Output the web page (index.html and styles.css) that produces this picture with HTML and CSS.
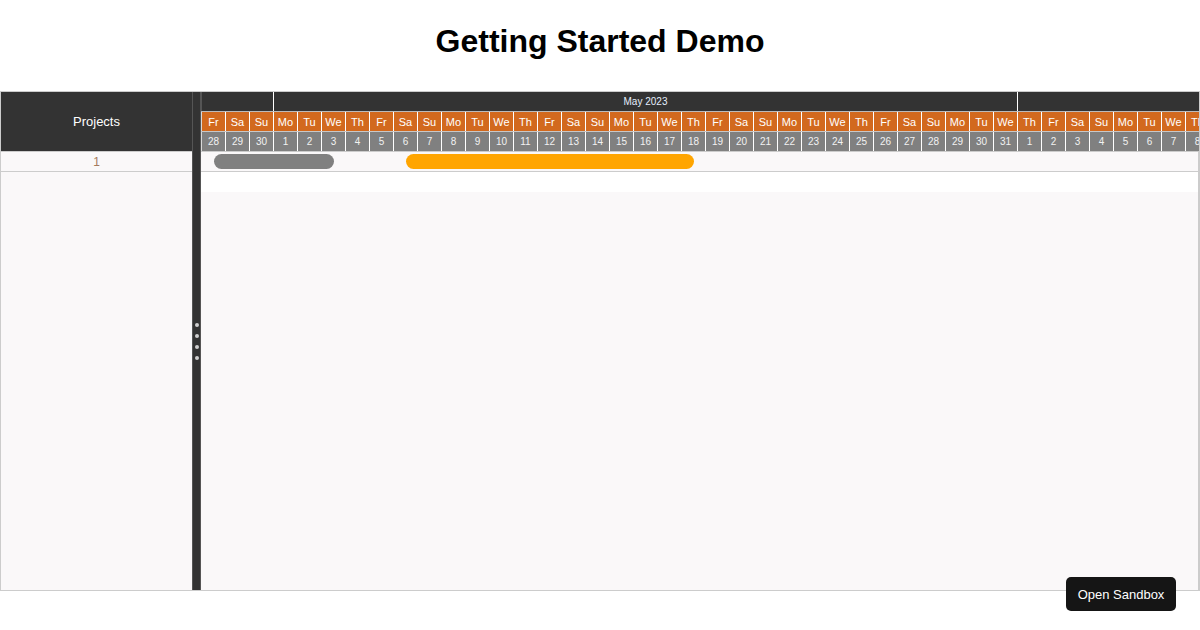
FILE: index.html
```html
<!DOCTYPE html>
<html>
<head>
<meta charset="utf-8">
<title>Getting Started Demo</title>
<link rel="stylesheet" href="styles.css">
</head>
<body>
<h1 class="title">Getting Started Demo</h1>
<div class="gantt">
  <div class="grid">
    <div class="grid-head">Projects</div>
    <div class="grid-row">1</div>
    <div class="grid-rest"></div>
  </div>
  <div class="splitter">
    <span class="dot"></span><span class="dot"></span><span class="dot"></span><span class="dot"></span>
  </div>
  <div class="timeline">
    <div class="tl-row months">
      <div class="month" style="width:72px"></div>
      <div class="month" style="width:744px">May 2023</div>
      <div class="month" style="width:240px"></div>
    </div>
    <div class="tl-row daynames">
      <div class="cell">Fr</div><div class="cell">Sa</div><div class="cell">Su</div>
      <div class="cell">Mo</div><div class="cell">Tu</div><div class="cell">We</div><div class="cell">Th</div><div class="cell">Fr</div><div class="cell">Sa</div><div class="cell">Su</div>
      <div class="cell">Mo</div><div class="cell">Tu</div><div class="cell">We</div><div class="cell">Th</div><div class="cell">Fr</div><div class="cell">Sa</div><div class="cell">Su</div>
      <div class="cell">Mo</div><div class="cell">Tu</div><div class="cell">We</div><div class="cell">Th</div><div class="cell">Fr</div><div class="cell">Sa</div><div class="cell">Su</div>
      <div class="cell">Mo</div><div class="cell">Tu</div><div class="cell">We</div><div class="cell">Th</div><div class="cell">Fr</div><div class="cell">Sa</div><div class="cell">Su</div>
      <div class="cell">Mo</div><div class="cell">Tu</div><div class="cell">We</div>
      <div class="cell">Th</div><div class="cell">Fr</div><div class="cell">Sa</div><div class="cell">Su</div>
      <div class="cell">Mo</div><div class="cell">Tu</div><div class="cell">We</div><div class="cell">Th</div><div class="cell">Fr</div><div class="cell">Sa</div>
    </div>
    <div class="tl-row daynums">
      <div class="cell">28</div><div class="cell">29</div><div class="cell">30</div>
      <div class="cell">1</div><div class="cell">2</div><div class="cell">3</div><div class="cell">4</div><div class="cell">5</div><div class="cell">6</div><div class="cell">7</div>
      <div class="cell">8</div><div class="cell">9</div><div class="cell">10</div><div class="cell">11</div><div class="cell">12</div><div class="cell">13</div><div class="cell">14</div>
      <div class="cell">15</div><div class="cell">16</div><div class="cell">17</div><div class="cell">18</div><div class="cell">19</div><div class="cell">20</div><div class="cell">21</div>
      <div class="cell">22</div><div class="cell">23</div><div class="cell">24</div><div class="cell">25</div><div class="cell">26</div><div class="cell">27</div><div class="cell">28</div>
      <div class="cell">29</div><div class="cell">30</div><div class="cell">31</div>
      <div class="cell">1</div><div class="cell">2</div><div class="cell">3</div><div class="cell">4</div>
      <div class="cell">5</div><div class="cell">6</div><div class="cell">7</div><div class="cell">8</div><div class="cell">9</div><div class="cell">10</div>
    </div>
    <div class="tl-body">
      <div class="task-row">
        <div class="bar bar-gray" style="left:13px;width:120px"></div>
        <div class="bar bar-orange" style="left:205px;width:288px"></div>
      </div>
      <div class="empty-row"></div>
      <div class="tl-rest"></div>
    </div>
  </div>
</div>
<a class="sandbox-btn" href="#">Open Sandbox</a>
</body>
</html>
```
FILE: styles.css
```css
html, body {
  margin: 0;
  padding: 0;
  background: #fff;
  font-family: "Liberation Sans", Arial, sans-serif;
}
.title {
  margin: 0 0 32px 0;
  padding-top: 23px;
  font-size: 32px;
  line-height: 36px;
  font-weight: bold;
  text-align: center;
  color: #000;
}
.gantt {
  box-sizing: border-box;
  width: 1200px;
  height: 500px;
  border: 1px solid #ccc;
  display: flex;
  overflow: hidden;
}
.grid {
  width: 191px;
  flex: none;
  display: flex;
  flex-direction: column;
  background: #faf8f9;
}
.grid-head {
  box-sizing: border-box;
  height: 60px;
  background: #333;
  border-bottom: 1px solid #ccc;
  color: #fff;
  font-size: 13px;
  display: flex;
  align-items: center;
  justify-content: center;
}
.grid-row {
  box-sizing: border-box;
  height: 20px;
  border-bottom: 1px solid #ccc;
  font-size: 12px;
  color: #a47a5c;
  display: flex;
  align-items: center;
  justify-content: center;
}
.grid-rest {
  flex: 1;
}
.splitter {
  box-sizing: border-box;
  width: 9px;
  flex: none;
  background: #333;
  border-left: 1px solid #555;
  border-right: 1px solid #555;
  display: flex;
  flex-direction: column;
  align-items: center;
  justify-content: center;
  gap: 7px;
}
.dot {
  width: 4px;
  height: 4px;
  border-radius: 50%;
  background: #d0d0d0;
}
.timeline {
  flex: 1;
  min-width: 0;
  overflow: hidden;
  display: flex;
  flex-direction: column;
}
.tl-row {
  display: flex;
  flex: none;
  height: 20px;
  box-sizing: border-box;
  white-space: nowrap;
}
.months {
  background: #333;
  border-bottom: 1px solid #bbb;
}
.month {
  flex: none;
  box-sizing: border-box;
  border-left: 1px solid #fff;
  color: #e4eefc;
  font-size: 10px;
  display: flex;
  align-items: center;
  justify-content: center;
}
.month:first-child {
  border-left-color: #555;
}
.daynames {
  background: #d2691e;
  border-bottom: 1px solid #c8c8c8;
}
.daynums {
  background: #808080;
  border-bottom: 1px solid #ccc;
}
.cell {
  flex: none;
  box-sizing: border-box;
  width: 24px;
  border-left: 1px solid #fff;
  display: flex;
  align-items: center;
  justify-content: center;
  color: #fff;
}
.cell:first-child {
  border-left-color: #d9d9d9;
}
.daynames .cell {
  font-size: 11px;
}
.daynums .cell {
  font-size: 10px;
  color: #f2f2f2;
}
.tl-body {
  flex: 1;
  display: flex;
  flex-direction: column;
  border-right: 1px solid #ccc;
}
.task-row {
  position: relative;
  flex: none;
  box-sizing: border-box;
  height: 20px;
  background: #faf8f9;
  border-bottom: 1px solid #ccc;
}
.bar {
  position: absolute;
  top: 2px;
  height: 15px;
  border-radius: 8px;
}
.bar-gray {
  background: #808080;
}
.bar-orange {
  background: #ffa500;
}
.empty-row {
  flex: none;
  height: 20px;
  background: #fff;
}
.tl-rest {
  flex: 1;
  background: #faf8f9;
}
.sandbox-btn {
  position: fixed;
  right: 24px;
  bottom: 19px;
  box-sizing: border-box;
  width: 110px;
  height: 34px;
  background: #151515;
  border-radius: 5px;
  color: #fff;
  font-size: 13px;
  text-decoration: none;
  display: flex;
  align-items: center;
  justify-content: center;
}
```
